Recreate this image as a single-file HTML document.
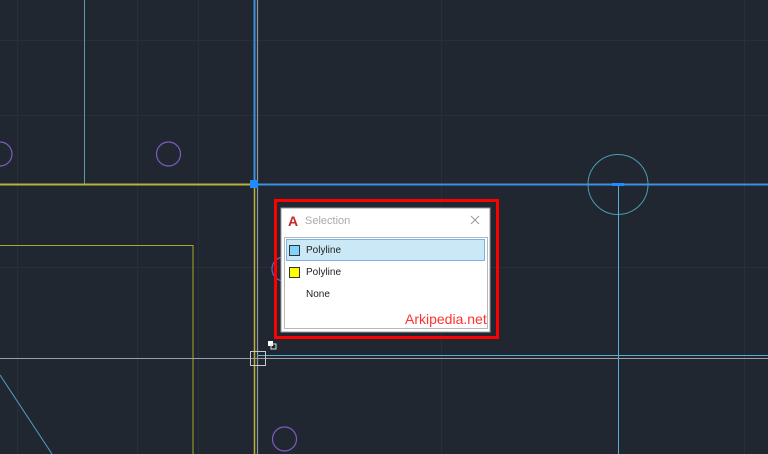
<!DOCTYPE html>
<html><head><style>
body{margin:0;width:768px;height:454px;overflow:hidden;background:#212730;font-family:"Liberation Sans",sans-serif}
svg{position:absolute;left:0;top:0}
.t{position:absolute;font-size:10px;color:#222}
</style></head><body>
<svg width="768" height="454">
<g stroke="#282f39" stroke-width="1">
<line x1="17.5" y1="0" x2="17.5" y2="454"/><line x1="137.5" y1="0" x2="137.5" y2="454"/><line x1="198.5" y1="0" x2="198.5" y2="454"/><line x1="441.5" y1="0" x2="441.5" y2="454"/><line x1="744.5" y1="0" x2="744.5" y2="454"/>
<line x1="0" y1="40.5" x2="768" y2="40.5"/><line x1="0" y1="267.5" x2="768" y2="267.5"/><line x1="0" y1="115.5" x2="768" y2="115.5"/>
</g>
<line x1="84.5" y1="0" x2="84.5" y2="184" stroke="#5c98a8" stroke-width="1"/>
<rect x="-5" y="245.5" width="198" height="220" fill="none" stroke="#a8a82a" stroke-width="1"/>
<line x1="0" y1="375" x2="52" y2="454" stroke="#4f9fc0" stroke-width="1"/>
<line x1="257.5" y1="0" x2="257.5" y2="454" stroke="#8f959c" stroke-width="1.2"/>
<line x1="254.5" y1="0" x2="254.5" y2="184" stroke="#3d8fe0" stroke-width="2"/>
<line x1="254.5" y1="184" x2="254.5" y2="454" stroke="#b6b23c" stroke-width="1.5"/>
<line x1="0" y1="184.5" x2="254" y2="184.5" stroke="#b6b23c" stroke-width="2"/>
<line x1="254" y1="184.5" x2="768" y2="184.5" stroke="#3d8fe0" stroke-width="2"/>
<rect x="250" y="180" width="8" height="8" fill="#1e8cff"/>
<g fill="none" stroke="#7d5cc0" stroke-width="1.2">
<circle cx="0" cy="154" r="12"/><circle cx="168.5" cy="154" r="12"/><circle cx="284.5" cy="439" r="12"/><circle cx="284" cy="269" r="12"/>
</g>
<circle cx="618" cy="184.5" r="30" fill="none" stroke="#4a9cb4" stroke-width="1"/>
<line x1="618.5" y1="184" x2="618.5" y2="454" stroke="#5aaed0" stroke-width="1"/>
<rect x="612" y="183" width="12" height="3" fill="#1e8cff"/>
<line x1="258" y1="355.5" x2="768" y2="355.5" stroke="#5aaed0" stroke-width="1"/>
<line x1="0" y1="358.5" x2="768" y2="358.5" stroke="#9aa0a6" stroke-width="1"/>
<rect x="250.5" y="351.5" width="15" height="14" fill="none" stroke="#c8c8c8" stroke-width="1"/>
<rect x="268" y="341" width="5" height="5" fill="#fff"/><rect x="271" y="344" width="5" height="5" fill="none" stroke="#ddd"/>
<rect x="275.5" y="200.5" width="222" height="137" fill="none" stroke="#ff0000" stroke-width="3"/>
<rect x="281" y="208" width="209" height="124" fill="#fff" stroke="#9a9a9a"/>
<rect x="284.5" y="237.5" width="203" height="91" fill="#fff" stroke="#b8b8b8"/>
<rect x="286.5" y="239.5" width="198" height="21" fill="#cbe8f6" stroke="#7ab4e6"/>
<rect x="289.5" y="245.5" width="10" height="10" fill="#7fd4f8" stroke="#333"/>
<rect x="289.5" y="267.5" width="10" height="10" fill="#ffff00" stroke="#333"/>
<line x1="471" y1="216" x2="479" y2="224" stroke="#999"/><line x1="479" y1="216" x2="471" y2="224" stroke="#999"/>
</svg>
<div class="t" style="left:288px;top:213px;font-size:14px;font-weight:bold;color:#c62828">A</div>
<div class="t" style="left:305px;top:215px;font-size:11px;color:#aaa">Selection</div>
<div class="t" style="left:306px;top:245px">Polyline</div>
<div class="t" style="left:306px;top:267px">Polyline</div>
<div class="t" style="left:306px;top:289px">None</div>
<div class="t" style="left:405px;top:311px;font-size:14px;color:#ff3030">Arkipedia.net</div>
</body></html>
